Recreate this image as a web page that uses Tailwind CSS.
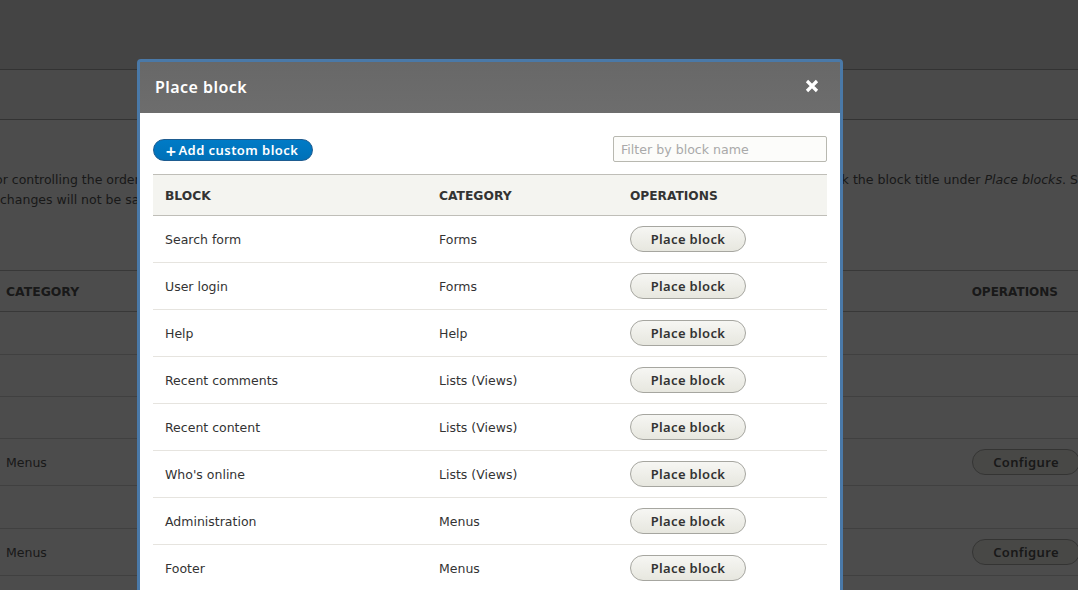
<!DOCTYPE html>
<html>
<head>
<meta charset="utf-8">
<script src="https://cdn.jsdelivr.net/npm/@tailwindcss/browser@4"></script>
</head>
<body class="m-0 overflow-hidden">
<div class="relative w-[1078px] h-[590px] overflow-hidden bg-white font-['DejaVu_Sans',sans-serif] text-[12.5px] text-[#333]">
  <!-- page behind the dialog -->
  <div class="h-[590px] flex flex-col text-[#555]">
    <div class="h-[70px] shrink-0 bg-[#e3e3e3] border-b border-[#aaaaaa]"></div>
    <div class="h-[50px] shrink-0 bg-[#f7f7f7] border-b border-[#aaaaaa]"></div>
    <div class="h-[150px] shrink-0 pt-[50px] overflow-hidden">
      <div class="flex justify-between whitespace-nowrap leading-[20px]">
        <span class="ml-[-5px]">or controlling the order</span>
        <span class="text-[12.6px]">k the block title under <em>Place blocks</em>. S</span>
      </div>
      <div class="leading-[20px] whitespace-nowrap">changes will not be saved</div>
    </div>
    <div class="h-[42px] shrink-0 flex items-center pt-[2px] border-t border-b border-[#bdbdbd] font-bold">
      <span class="ml-[6px] text-[12.4px]">CATEGORY</span>
      <span class="ml-auto mr-[20px] text-[12px]">OPERATIONS</span>
    </div>
    <div class="h-[43px] shrink-0 border-b border-[#d5d5d5]"></div>
    <div class="h-[42px] shrink-0 border-b border-[#d5d5d5]"></div>
    <div class="h-[42px] shrink-0 border-b border-[#d5d5d5]"></div>
    <div class="h-[47px] shrink-0 pt-[2px] border-b border-[#d5d5d5] flex items-center justify-between">
      <span class="ml-[6px]">Menus</span>
      <span class="mr-[-2px] mb-[2px] w-[108px] h-[26px] pt-[1px] rounded-full border border-[#b0b0ac] bg-[#f0f0ec] font-['Noto_Sans',sans-serif] font-semibold text-[13px] tracking-[0.35px] flex items-center justify-center">Configure</span>
    </div>
    <div class="h-[43px] shrink-0 border-b border-[#d5d5d5]"></div>
    <div class="h-[47px] shrink-0 pt-[2px] border-b border-[#d5d5d5] flex items-center justify-between">
      <span class="ml-[6px]">Menus</span>
      <span class="mr-[-2px] mb-[2px] w-[108px] h-[26px] pt-[1px] rounded-full border border-[#b0b0ac] bg-[#f0f0ec] font-['Noto_Sans',sans-serif] font-semibold text-[13px] tracking-[0.35px] flex items-center justify-center">Configure</span>
    </div>
  </div>
  <!-- overlay -->
  <div class="absolute inset-0 bg-black/70"></div>
  <!-- dialog -->
  <div class="absolute left-[137px] top-[59px] w-[706px] h-[560px] rounded-[4px] border-[3px] border-[#4a79a8] bg-[#686868] overflow-hidden">
    <div class="h-[51px] bg-gradient-to-b from-[#686868] to-[#6d6d6d] flex items-center justify-between pl-[15px] pr-[21px]">
      <span class="mb-[2px] text-white font-['Noto_Sans',sans-serif] font-semibold text-[16px] tracking-[0.45px]">Place block</span>
      <svg width="14" height="14" viewBox="0 0 14 14" class="block mb-[3px]"><path d="M2 2L12 12M12 2L2 12" stroke="#fff" stroke-width="3.2"/></svg>
    </div>
    <div class="h-full bg-white px-[13px] pt-[23px]">
      <div class="flex items-center justify-between h-[26px]">
        <a class="mt-[2px] h-[22px] w-[160px] pt-[1px] pr-[2px] rounded-full bg-gradient-to-b from-[#007bc6] to-[#0071b8] border border-[#1e5c90] text-white font-['Noto_Sans',sans-serif] font-semibold text-[13px] tracking-[0.45px] flex items-center justify-center gap-[2px]"><span class="text-[18px] leading-none">+</span><span>Add custom block</span></a>
        <input placeholder="Filter by block name" class="w-[214px] h-[26px] border border-[#b8b8b0] rounded-[2px] bg-[#fcfcfa] px-[7px] text-[12.6px] placeholder:text-[#a9a9a9]">
      </div>
      <table class="mt-[12px] w-[674px] table-fixed border-collapse">
        <thead>
          <tr class="h-[41px] bg-[#f4f4f0] border-t border-b border-[#bfbeb8] text-left">
            <th class="w-[274px] pl-[12px] pt-[3px] font-bold text-[12.3px]">BLOCK</th>
            <th class="w-[191px] pl-[12px] pt-[3px] font-bold text-[12.3px]">CATEGORY</th>
            <th class="pl-[12px] pt-[3px] font-bold text-[12.2px]">OPERATIONS</th>
          </tr>
        </thead>
        <tbody>
          <tr class="h-[47px] border-b border-[#e6e4df]"><td class="pl-[12px] pt-[2px]">Search form</td><td class="pl-[12px] pt-[2px]">Forms</td><td class="pl-[12px]"><button class="block w-[116px] h-[26px] pt-[1px] rounded-full border border-[#a6a6a0] bg-gradient-to-b from-[#f6f6f3] to-[#e7e7df] font-['Noto_Sans',sans-serif] font-semibold text-[13px] tracking-[0.35px] text-[#333]">Place block</button></td></tr>
          <tr class="h-[47px] border-b border-[#e6e4df]"><td class="pl-[12px] pt-[2px]">User login</td><td class="pl-[12px] pt-[2px]">Forms</td><td class="pl-[12px]"><button class="block w-[116px] h-[26px] pt-[1px] rounded-full border border-[#a6a6a0] bg-gradient-to-b from-[#f6f6f3] to-[#e7e7df] font-['Noto_Sans',sans-serif] font-semibold text-[13px] tracking-[0.35px] text-[#333]">Place block</button></td></tr>
          <tr class="h-[47px] border-b border-[#e6e4df]"><td class="pl-[12px] pt-[2px]">Help</td><td class="pl-[12px] pt-[2px]">Help</td><td class="pl-[12px]"><button class="block w-[116px] h-[26px] pt-[1px] rounded-full border border-[#a6a6a0] bg-gradient-to-b from-[#f6f6f3] to-[#e7e7df] font-['Noto_Sans',sans-serif] font-semibold text-[13px] tracking-[0.35px] text-[#333]">Place block</button></td></tr>
          <tr class="h-[47px] border-b border-[#e6e4df]"><td class="pl-[12px] pt-[2px]">Recent comments</td><td class="pl-[12px] pt-[2px]">Lists (Views)</td><td class="pl-[12px]"><button class="block w-[116px] h-[26px] pt-[1px] rounded-full border border-[#a6a6a0] bg-gradient-to-b from-[#f6f6f3] to-[#e7e7df] font-['Noto_Sans',sans-serif] font-semibold text-[13px] tracking-[0.35px] text-[#333]">Place block</button></td></tr>
          <tr class="h-[47px] border-b border-[#e6e4df]"><td class="pl-[12px] pt-[2px]">Recent content</td><td class="pl-[12px] pt-[2px]">Lists (Views)</td><td class="pl-[12px]"><button class="block w-[116px] h-[26px] pt-[1px] rounded-full border border-[#a6a6a0] bg-gradient-to-b from-[#f6f6f3] to-[#e7e7df] font-['Noto_Sans',sans-serif] font-semibold text-[13px] tracking-[0.35px] text-[#333]">Place block</button></td></tr>
          <tr class="h-[47px] border-b border-[#e6e4df]"><td class="pl-[12px] pt-[2px]">Who's online</td><td class="pl-[12px] pt-[2px]">Lists (Views)</td><td class="pl-[12px]"><button class="block w-[116px] h-[26px] pt-[1px] rounded-full border border-[#a6a6a0] bg-gradient-to-b from-[#f6f6f3] to-[#e7e7df] font-['Noto_Sans',sans-serif] font-semibold text-[13px] tracking-[0.35px] text-[#333]">Place block</button></td></tr>
          <tr class="h-[47px] border-b border-[#e6e4df]"><td class="pl-[12px] pt-[2px]">Administration</td><td class="pl-[12px] pt-[2px]">Menus</td><td class="pl-[12px]"><button class="block w-[116px] h-[26px] pt-[1px] rounded-full border border-[#a6a6a0] bg-gradient-to-b from-[#f6f6f3] to-[#e7e7df] font-['Noto_Sans',sans-serif] font-semibold text-[13px] tracking-[0.35px] text-[#333]">Place block</button></td></tr>
          <tr class="h-[47px] border-b border-[#e6e4df]"><td class="pl-[12px] pt-[2px]">Footer</td><td class="pl-[12px] pt-[2px]">Menus</td><td class="pl-[12px]"><button class="block w-[116px] h-[26px] pt-[1px] rounded-full border border-[#a6a6a0] bg-gradient-to-b from-[#f6f6f3] to-[#e7e7df] font-['Noto_Sans',sans-serif] font-semibold text-[13px] tracking-[0.35px] text-[#333]">Place block</button></td></tr>
        </tbody>
      </table>
    </div>
  </div>
</div>
</body>
</html>
